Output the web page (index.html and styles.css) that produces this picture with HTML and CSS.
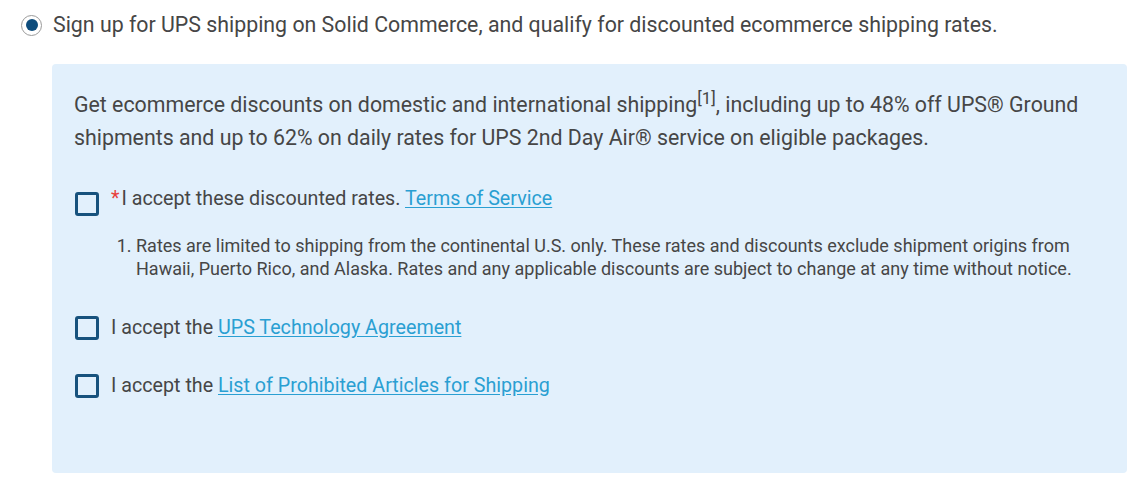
FILE: index.html
```html
<!DOCTYPE html>
<html lang="en">
<head>
<meta charset="utf-8">
<title>UPS shipping</title>
<link rel="stylesheet" href="styles.css">
</head>
<body>
<div class="page">
  <label class="option">
    <span class="radio"><span class="radio-dot"></span></span>
    <span class="option-text">Sign up for UPS shipping on Solid Commerce, and qualify for discounted ecommerce shipping rates.</span>
  </label>
  <div class="panel">
    <p class="intro">Get ecommerce discounts on domestic and international shipping<sup class="ref">[1]</sup>, including up to 48% off UPS® Ground shipments and up to 62% on daily rates for UPS 2nd Day Air® service on eligible packages.</p>
    <div class="check-row check-row-first">
      <span class="checkbox"></span>
      <span class="check-label"><span class="req">*</span>I accept these discounted rates. <a class="link" href="#">Terms of Service</a></span>
    </div>
    <ol class="notes">
      <li>Rates are limited to shipping from the continental U.S. only. These rates and discounts exclude shipment origins from Hawaii, Puerto Rico, and Alaska. Rates and any applicable discounts are subject to change at any time without notice.</li>
    </ol>
    <div class="check-row check-row-second">
      <span class="checkbox"></span>
      <span class="check-label">I accept the <a class="link" href="#">UPS Technology Agreement</a></span>
    </div>
    <div class="check-row check-row-third">
      <span class="checkbox"></span>
      <span class="check-label">I accept the <a class="link" href="#">List of Prohibited Articles for Shipping</a></span>
    </div>
  </div>
</div>
</body>
</html>
```
FILE: styles.css
```css
html, body {
  margin: 0;
  padding: 0;
  background: #ffffff;
}
body {
  font-family: Roboto, "Liberation Sans", Arial, sans-serif;
  color: #464646;
  font-size: 21.33px;
}
.page {
  padding-top: 11px;
}
.option {
  display: flex;
  align-items: center;
  padding-left: 21px;
  line-height: 28px;
}
.radio {
  width: 21px;
  height: 21px;
  box-sizing: border-box;
  border: 1px solid #9a9a9a;
  border-radius: 50%;
  display: flex;
  align-items: center;
  justify-content: center;
  background: #fff;
  margin-right: 11px;
  flex: none;
}
.radio-dot {
  width: 12px;
  height: 12px;
  border-radius: 50%;
  background: #0e4d7d;
}
.option-text {
  font-size: 21.33px;
}
.panel {
  margin: 25px 0 0 52px;
  width: 1075px;
  height: 409px;
  box-sizing: border-box;
  background: #e2f0fc;
  border-radius: 4px;
  padding: 24px 22px 0 22px;
}
.intro {
  margin: 0;
  font-size: 21.33px;
  line-height: 33px;
}
.ref {
  font-size: 17px;
  line-height: 0;
  vertical-align: 8px;
}
.check-row {
  display: flex;
  align-items: center;
  line-height: 28px;
  font-size: 19.7px;
}
.check-row-first {
  margin-top: 31px;
  align-items: flex-start;
}
.check-row-first .checkbox {
  margin-top: 7px;
}
.check-row-second {
  margin-top: 34px;
}
.check-row-third {
  margin-top: 30px;
}
.checkbox {
  width: 24px;
  height: 24px;
  box-sizing: border-box;
  border: 3px solid #17527d;
  border-radius: 3px;
  margin: 0 12px 0 1px;
  flex: none;
}
.req {
  color: #e8413b;
  margin-right: 2px;
}
.link {
  color: #2a9fd2;
  text-decoration: underline;
  text-underline-offset: 2px;
}
.notes {
  margin: 18px 0 0 0;
  padding-left: 62px;
  font-size: 18px;
  line-height: 23px;
}
```
